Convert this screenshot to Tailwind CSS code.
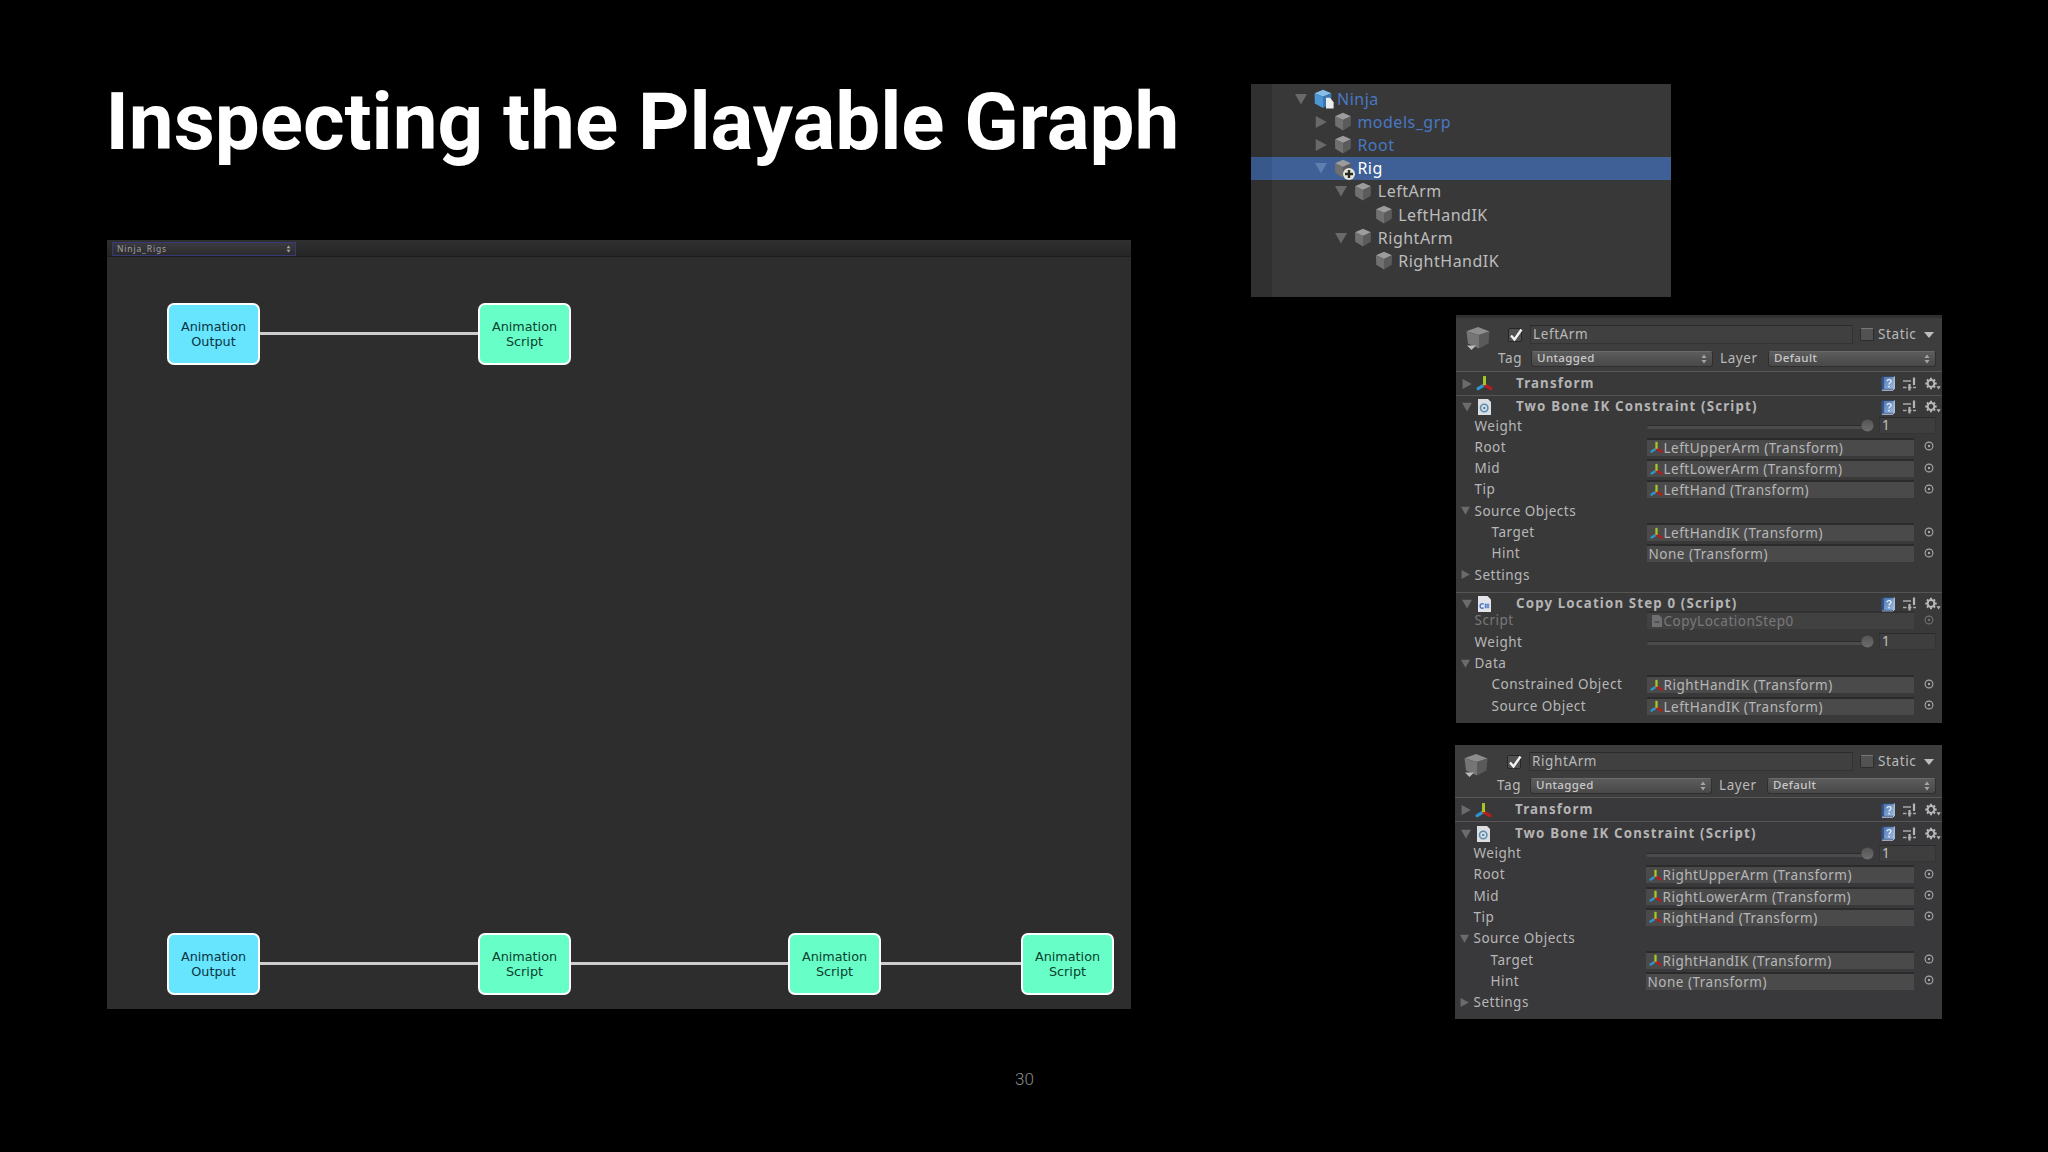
<!DOCTYPE html>
<html lang="en">
<head>
  <meta charset="UTF-8" />
  <meta name="viewport" content="width=device-width, initial-scale=1.0" />
  <title>Inspecting the Playable Graph</title>
  <script src="https://cdn.jsdelivr.net/npm/@tailwindcss/browser@4"></script>
</head>
<body class="bg-black overflow-hidden">

  <!-- Icons -->
  <svg class="absolute w-0 h-0">
    <defs>
      <linearGradient id="book" x1="0" y1="0" x2="1" y2="1">
        <stop offset="0" stop-color="#4f77b3" /><stop offset="1" stop-color="#9dbbe2" />
      </linearGradient>
      <linearGradient id="knob" x1="0" y1="0" x2="0" y2="1">
        <stop offset="0" stop-color="#555555" /><stop offset="1" stop-color="#6e6e6e" />
      </linearGradient>
    </defs>
    <symbol id="cube" viewBox="0 0 18 20">
      <path d="M9 0.8 17.4 4.4 9 8.4 0.6 4.4z" fill="#9c9c9c" />
      <path d="M0.6 4.4 9 8.4V19.4L0.8 14.4z" fill="#707070" />
      <path d="M17.4 4.4 9 8.4V19.4L17.2 14.4z" fill="#5b5b5b" />
    </symbol>
    <symbol id="prefab" viewBox="0 0 20 20">
      <path d="M9 0.8 17.4 4.2 9 7.8 0.6 4.2z" fill="#86c0ea" />
      <path d="M0.6 4.2 9 7.8V19L0.8 14.6z" fill="#4c97d3" />
      <path d="M17.4 4.2 9 7.8V19L17.2 14.6z" fill="#3877b1" />
      <path d="M12 8.8h4l3.6 4.4v6.4H12z" fill="#ececec" />
    </symbol>
    <symbol id="bigcube" viewBox="0 0 24 26">
      <path d="M12 1 23.5 5.5 13 9 0.5 5.2z" fill="#8d8d8d" />
      <path d="M0.5 5.2 13 9V22.5L2 17.5z" fill="#757575" />
      <path d="M23.5 5.5 13 9V22.5L22.5 17.5z" fill="#5a5a5a" />
      <path d="M1 19.5h9L5.5 24z" fill="#bdbdbd" />
    </symbol>
    <symbol id="plus" viewBox="0 0 12 12">
      <circle cx="6" cy="6" r="6" fill="#e4e4d8" />
      <path d="M6 2v8M2 6h8" stroke="#2a2a22" stroke-width="2.4" />
    </symbol>
    <symbol id="axes" viewBox="0 0 16 16">
      <path d="M7.9 9.2 2 12.9" stroke="#2f94c9" stroke-width="3" stroke-linecap="round" />
      <path d="M8.1 9.2 14 12.9" stroke="#b81d1d" stroke-width="3" stroke-linecap="round" />
      <path d="M8 9.6V1" stroke="#a6c822" stroke-width="2.8" />
    </symbol>
    <symbol id="gearfile" viewBox="0 0 13 16">
      <path d="M0 0h10l3 3v13H0z" fill="#dcdfe2" />
      <circle cx="6.2" cy="9" r="3.7" fill="none" stroke="#5c8db0" stroke-width="1.6" />
      <circle cx="6.2" cy="9" r="1.3" fill="#5c8db0" />
    </symbol>
    <symbol id="csfile" viewBox="0 0 13 16">
      <path d="M0 0h9.5L13 3.5V16H0z" fill="#e2e4ea" />
      <path d="M5.6 8.2C4.200 7 2.100 7.900 2.100 10s2.100 3 3.500 1.800" fill="none" stroke="#4777c4" stroke-width="1.500" />
      <path d="M7.700 7.400v5M10 7.400v5M6.500 8.900h4.900M6.500 11h4.900" stroke="#4777c4" stroke-width="1" />
    </symbol>
    <symbol id="grayfile" viewBox="0 0 10 12">
      <path d="M0 0h7l3 3v9H0z" fill="#a5a5a8" />
      <path d="M2.500 7h5" stroke="#6a6a6a" stroke-width="2" />
    </symbol>
    <symbol id="help" viewBox="0 0 14 15">
      <path d="M0.500 1.500 2.500 0.500H13.500V13L11.500 14.500H0.500z" fill="#34558a" />
      <path d="M3 1.200h10v11.600H3z" fill="url(#book)" />
      <path d="M13.300 0.500V13L11.800 14.200H1" fill="none" stroke="#ccd6e4" stroke-width="1" />
      <path d="M6 5.300c0-2.200 4-2.200 4 0 0 1.500-2 1.500-2 3.200" fill="none" stroke="#e6eef8" stroke-width="1.300" />
      <circle cx="8" cy="10.600" r="0.900" fill="#e6eef8" />
    </symbol>
    <symbol id="preset" viewBox="0 0 13 14">
      <path d="M0 4h8M0 10.500h3.500M5 10.500h3.500M10 10.500h3" stroke="#a9a9a9" stroke-width="1.700" />
      <path d="M11 0.500v7.500M6.500 7v6.500" stroke="#b4b4b4" stroke-width="2.200" />
    </symbol>
    <symbol id="gear" viewBox="0 0 16 14">
      <circle cx="6" cy="6.500" r="3.400" fill="none" stroke="#b9b9b9" stroke-width="2" />
      <path d="M6 0.800v1.800M6 10.400v1.800M0.300 6.500h1.800M9.900 6.500h1.800M2 2.500l1.200 1.200M8.800 9.300 10 10.500M10 2.500 8.800 3.700M3.200 9.300 2 10.500" stroke="#b9b9b9" stroke-width="2" />
      <path d="M11.500 9.300h4.200L13.600 12.500z" fill="#b9b9b9" />
    </symbol>
    <symbol id="picker" viewBox="0 0 10 10">
      <circle cx="5" cy="5" r="3.900" fill="none" stroke="#a8a8a8" stroke-width="1.100" />
      <circle cx="5" cy="5" r="1.200" fill="#a8a8a8" />
    </symbol>
    <symbol id="down" viewBox="0 0 10 10"><path d="M0 0.800h10L5 9.600z" fill="currentColor" /></symbol>
    <symbol id="right" viewBox="0 0 10 10"><path d="M0.600 0v10L9.800 5z" fill="currentColor" /></symbol>
    <symbol id="flatdown" viewBox="0 0 10 6"><path d="M0 0h10L5 6z" fill="currentColor" /></symbol>
    <symbol id="updown" viewBox="0 0 6 10">
      <path d="M0.500 4 3 0.500 5.500 4zM0.500 6 3 9.500 5.500 6z" fill="#a5a5a5" />
    </symbol>
    <symbol id="check" viewBox="0 0 14 14">
      <path d="M2 7.500 5.500 11.500 12.500 1.500" fill="none" stroke="#f2f2f2" stroke-width="2.400" />
    </symbol>
  </svg>

  <main class="w-[2048px] h-[1152px] flex flex-col bg-black font-['Noto_Sans',sans-serif]">
    <div class="flex h-[1040px]">

      <!-- Title and graph -->
      <section class="w-[1251px] pl-[107px] pt-[75px]">
        <h1 class="h-[165px] -ml-[1.500px] font-['Roboto',sans-serif] font-bold text-[80px] leading-[94px] tracking-[-0.030px] text-white whitespace-nowrap">Inspecting the Playable Graph</h1>
        <div class="w-[1024px] h-[769px] bg-[#2d2d2e]">
          <div class="h-[17px] pl-[5px] pt-[2px] bg-linear-to-b from-[#303030] to-[#252525] border-b border-[#1d1d1d]">
            <div class="w-[184px] h-[14px] px-1 flex items-center justify-between border border-[#383a78] bg-linear-to-b from-[#3b3b3f] to-[#2c2c2e] text-[8.500px] tracking-[0.850px] text-[#a0a0a0]">
              <span>Ninja_Rigs</span>
              <svg class="w-[5px] h-2"><use href="#updown" /></svg>
            </div>
          </div>
          <!-- Nodes on the free canvas -->
          <div id="graph" class="relative h-[752px] font-['DejaVu_Sans',sans-serif] text-[12.800px] leading-[15px] text-center"></div>
        </div>
      </section>

      <section class="pt-[84px]">
        <!-- Hierarchy -->
        <div id="hierarchy" class="w-[420px] h-[213px] pt-[3px] bg-[#383838] bg-linear-to-r from-[#303030] from-[21px] to-[#383838] to-[21px] text-[16px] text-[#bdbdbd] tracking-[0.5px]"></div>
        <!-- Inspectors -->
        <div id="left" class="mt-[18px] ml-[205px] w-[486px] h-[408px] bg-[#39393a] overflow-hidden"></div>
        <div id="right-arm" class="mt-[22px] ml-[204px] w-[487px] h-[274px] bg-[#39383a] overflow-hidden"></div>
      </section>
    </div>

    <footer class="pt-[27px] pl-px text-center font-['Roboto',sans-serif] font-light text-[17px] leading-[24px] text-[#8a8a8a]">30</footer>
  </main>

  <script>
    const icon = (id, cls) => `<svg class="${cls} shrink-0"><use href="#${id}" /></svg>`;

    // Graph
    const nodes = [
      [60, 46, 'Output'], [371, 46, 'Script'],
      [60, 676, 'Output'], [371, 676, 'Script'], [681, 676, 'Script'], [914, 676, 'Script'],
    ];
    const lines = [[153, 75, 218], [153, 705, 218], [464, 705, 217], [774, 705, 140]];
    document.getElementById('graph').innerHTML =
      lines.map(([x, y, w]) => `<div class="absolute h-[3px] bg-[#cfcccd]" style="left:${x}px;top:${y}px;width:${w}px"></div>`).join('') +
      nodes.map(([x, y, kind]) => `
        <div class="absolute w-[93px] h-[62px] rounded-[7px] border-2 border-white flex items-center justify-center ${kind == 'Output' ? 'bg-[#67e5ff] text-[#0c3440]' : 'bg-[#67ffc7] text-[#0c4030]'}" style="left:${x}px;top:${y}px">
          <span>Animation<br>${kind}</span>
        </div>`).join('');

    // Hierarchy
    const tree = [
      ['Ninja', 0, 'down', 'prefab'], ['models_grp', 1, 'right', 'cube'], ['Root', 1, 'right', 'cube'], ['Rig', 1, 'down', 'cube'],
      ['LeftArm', 2, 'down', 'cube'], ['LeftHandIK', 3, '', 'cube'], ['RightArm', 2, 'down', 'cube'], ['RightHandIK', 3, '', 'cube'],
    ];
    document.getElementById('hierarchy').innerHTML = tree.map(([name, depth, arrow, ic], i) => `
      <div class="h-[23.200px] flex items-center ${i == 3 ? 'bg-linear-to-r from-[#38578a] from-[21px] to-[#3f5f97] to-[21px] text-white' : i < 3 ? 'text-[#4977c3]' : ''}" style="padding-left:${43.5 + depth * 20.4}px">
        <span class="w-[19px] ${i == 3 ? 'text-[#5f7fae]' : 'text-[#696969]'}">${arrow ? icon(arrow, 'w-3 h-3') : ''}</span>
        <span class="relative w-[23.500px]">
          ${icon(ic, ic == 'prefab' ? 'w-5 h-5' : 'w-[18px] h-[19px]')}
          ${i == 3 ? icon('plus', 'w-3 h-3 absolute left-[9px] top-[9px]') : ''}
        </span>
        <span>${name}</span>
      </div>`).join('');

    // Inspector
    const tools = `${icon('help', 'w-[14px] h-[15px]')}${icon('preset', 'w-[13px] h-[14px] ml-[8px]')}${icon('gear', 'w-[16px] h-[14px] ml-[9px] mr-[1px]')}`;

    const popup = (text, cls) => `
      <div class="${cls} h-[16px] pl-[5px] pr-[5px] flex items-center justify-between rounded-[3px] border border-[#2f2f2f] border-t-[#6a6a6a] bg-linear-to-b from-[#5c5c5c] to-[#484848] text-[11.500px] font-medium tracking-[0.400px] text-[#c8c8c8]">
        <span class="-mt-px">${text}</span>${icon('updown', 'w-[6px] h-[10px]')}
      </div>`;

    const header = (name, cls, cubeCls, bodyCls) => `
      <div class="${cls} bg-[#3d3d3d] border-b border-[#585858] text-[13.500px] tracking-[0.6px] text-[#b9b9b9] flex">
        <div class="${cubeCls} w-[42px]">${icon('bigcube', 'w-6 h-[26px]')}</div>
        <div class="${bodyCls} flex-1 pr-[6px]">
          <div class="flex items-center h-[19px]">
            <span class="ml-[10px] w-[14px] h-[14px] rounded-[2px] border border-[#262626] bg-[#515151]">${icon('check', 'w-[14px] h-[14px] -mt-px')}</span>
            <span class="ml-[8px] flex-1 h-[19px] pl-[2px] leading-[17px] border border-[#333333] border-t-[#2a2a2a] bg-[#404040]">${name}</span>
            <span class="ml-[7px] w-[14px] h-[13px] rounded-[2px] border border-[#2c2c2c] border-t-[#777777] bg-[#525252]"></span>
            <span class="ml-[4px] w-[46px]">Static</span>
            <span class="text-[#bdbdbd] mr-[2px]">${icon('flatdown', 'w-[10px] h-[6px]')}</span>
          </div>
          <div class="flex items-center h-[16px] mt-[6.500px]">
            <span class="w-[33px]">Tag</span>
            ${popup('Untagged', 'w-[182px]')}
            <span class="ml-[7px] w-[48px]">Layer</span>
            ${popup('Default', 'flex-1')}
          </div>
        </div>
      </div>`;

    const comp = (title, arrow, ic, cls, fileCls) => `
      <div class="${cls} flex items-center text-[13.300px] font-bold tracking-[1.150px] text-[#b4b4b4]">
        <span class="w-[16px] text-[#6b6b6b]">${icon(arrow, 'w-[10px] h-[10px]')}</span>
        <span class="w-[38px]">${icon(ic, fileCls)}</span>
        <span class="flex-1">${title}</span>
        ${tools}
      </div>`;

    function row([label, kind, value]) {
      const indent = ['Target', 'Hint', 'Constrained Object', 'Source Object'].includes(label);
      const dim = kind == 'script' ? 'opacity-50' : '';
      let right = '';
      if (kind == 'slider') {
        right = `
          <div class="flex-1 h-[4px] mt-[3px] rounded-full bg-[#4b4b4b] border-t border-[#2c2c2c]"></div>
          <svg class="w-[13px] h-[13px] -ml-[7px] relative"><circle cx="6.500" cy="6.500" r="6" fill="url(#knob)" /></svg>
          <div class="ml-[5px] w-[57px] h-[17px] pl-[2px] leading-[15px] bg-[#3e3e3f] border border-[#343434] border-t-[#2b2b2b] text-[#c4c4c4]">1</div>
          <div class="w-[6px]"></div>`;
      } else if (kind) {
        const pre = kind == 'object' ? icon('axes', 'w-[13px] h-[13px] mr-px') : kind == 'script' ? icon('grayfile', 'w-[10px] h-[12px] ml-[2px] mr-[2px]') : '';
        right = `
          <div class="flex-1 h-[18px] flex items-center bg-[#4a4a4b] border-t-2 border-[#2b2b2b] ${kind == 'none' ? 'pl-[2px]' : 'pl-[3px]'} ${dim}"><span class="flex items-center h-4">${pre}<span>${value}</span></span></div>
          <div class="w-[28px] flex justify-end pr-[8px] ${dim}">${icon('picker', 'w-[10px] h-[10px] -mt-px')}</div>`;
      }
      const arrow = kind ? '' : label == 'Settings' ? 'right' : 'down';
      return `
        <div class="h-[21.300px] flex items-center">
          <div class="w-[190.500px] flex items-center shrink-0 ${dim}">
            <span class="w-[18.500px] pl-[5px] text-[#6b6b6b]">${arrow ? icon(arrow, 'w-[9px] h-[9px]') : ''}</span>
            <span class="${indent ? 'pl-[17px]' : ''}">${label}</span>
          </div>
          ${right}
        </div>`;
    }

    const rows = (list, cls) => `<div class="${cls} text-[13.500px] tracking-[0.5px] leading-[18px] text-[#b7b7b7]">${list.map(row).join('')}</div>`;

    const common = (side, cls) =>
      comp('Transform', 'right', 'axes', 'h-[24px] pl-[6px] pt-px border-b border-[#555555]', 'w-[17px] h-[17px] -ml-[2px]') +
      comp('Two Bone IK Constraint (Script)', 'down', 'gearfile', 'h-[20.400px] pl-[6px] pt-[3px]', 'w-[13px] h-[16px]') +
      rows([
        ['Weight', 'slider'],
        ['Root', 'object', `${side}UpperArm (Transform)`],
        ['Mid', 'object', `${side}LowerArm (Transform)`],
        ['Tip', 'object', `${side}Hand (Transform)`],
        ['Source Objects'],
        ['Target', 'object', `${side}HandIK (Transform)`],
        ['Hint', 'none', 'None (Transform)'],
        ['Settings'],
      ], cls);

    document.getElementById('left').innerHTML =
      header('LeftArm', 'h-[56.500px] border-t-[3px] border-t-[#303030]', 'pl-[10px] pt-[8px]', 'pt-[7px]') +
      common('Left', '-mt-px') +
      '<div class="mt-[6.500px] border-t border-[#555555]"></div>' +
      comp('Copy Location Step 0 (Script)', 'down', 'csfile', 'h-[18px] pl-[6px] pt-[5px]', 'w-[13px] h-[16px]') +
      rows([
        ['Script', 'script', 'CopyLocationStep0'],
        ['Weight', 'slider'],
        ['Data'],
        ['Constrained Object', 'object', 'RightHandIK (Transform)'],
        ['Source Object', 'object', 'LeftHandIK (Transform)'],
      ], '-mt-px');
    document.getElementById('right-arm').innerHTML =
      `<div class="-mt-[3.500px]">${header('RightArm', 'h-[56.500px]', 'pl-[9px] pt-[11px]', 'pt-[10.500px]')}${common('Right', '')}</div>`;
  </script>
</body>
</html>
